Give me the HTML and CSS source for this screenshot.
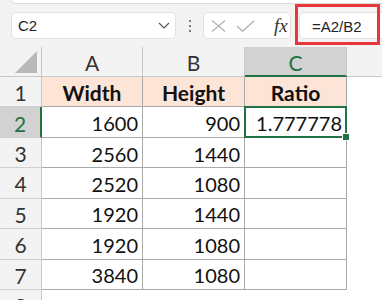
FILE: index.html
```html
<!DOCTYPE html>
<html lang="en">
<head>
    <meta charset="UTF-8">
    <meta name="viewport" content="width=device-width, initial-scale=1.0">
    <title>Ratio</title>
    <link rel="stylesheet" href="styles.css">
</head>
<body>
    <div class="toolbar">
        <div class="ribbon-edge"></div>
        <div class="bar">
            <div class="namebox">
                <span>C2</span>
                <svg class="chevron" width="12" height="7" viewBox="0 0 12 7">
                    <path d="M1 1 L6 6 L11 1" fill="none" stroke="#555" stroke-width="1.2"/>
                </svg>
            </div>
            <div class="dots"><i></i><i></i><i></i></div>
            <div class="fxbox">
                <svg width="15" height="12" viewBox="0 0 15 12">
                    <path d="M1 0.5 L14 11.5 M14 0.5 L1 11.5" stroke="#b0b0b0" stroke-width="1.2"/>
                </svg>
                <svg width="19" height="12" viewBox="0 0 19 12">
                    <path d="M1 6 L6.5 11.3 L18 0.7" fill="none" stroke="#b0b0b0" stroke-width="1.2"/>
                </svg>
                <span class="fx">fx</span>
            </div>
            <div class="formula">=A2/B2</div>
        </div>
        <div class="highlight"></div>
    </div>

    <div class="sheet">
        <div class="corner"><div class="tri"></div></div>
        <div class="colhead">A</div>
        <div class="colhead">B</div>
        <div class="colhead active">C</div>
        <div class="colhead rest"></div>

        <div class="rowhead">1</div>
        <div class="cell title">Width</div>
        <div class="cell title">Height</div>
        <div class="cell title">Ratio</div>
        <div class="blank"></div>

        <div class="rowhead active">2</div>
        <div class="cell">1600</div>
        <div class="cell">900</div>
        <div class="cell selected">1.777778</div>
        <div class="blank"></div>

        <div class="rowhead">3</div>
        <div class="cell">2560</div>
        <div class="cell">1440</div>
        <div class="cell"></div>
        <div class="blank"></div>

        <div class="rowhead">4</div>
        <div class="cell">2520</div>
        <div class="cell">1080</div>
        <div class="cell"></div>
        <div class="blank"></div>

        <div class="rowhead">5</div>
        <div class="cell">1920</div>
        <div class="cell">1440</div>
        <div class="cell"></div>
        <div class="blank"></div>

        <div class="rowhead">6</div>
        <div class="cell">1920</div>
        <div class="cell">1080</div>
        <div class="cell"></div>
        <div class="blank"></div>

        <div class="rowhead">7</div>
        <div class="cell">3840</div>
        <div class="cell">1080</div>
        <div class="cell"></div>
        <div class="blank"></div>

        <div class="rowhead">8</div>
        <div class="blank"></div>
        <div class="blank"></div>
        <div class="blank"></div>
        <div class="blank"></div>
    </div>
</body>
</html>
```

FILE: styles.css
```css
* {
    box-sizing: border-box;
}
body {
    margin: 0;
    background-color: #f3f3f3;
    font-family: Lato, "Open Sans", sans-serif;
    overflow: hidden;
}

/* formula bar */
.toolbar {
    position: relative;
    height: 47px;
}
.ribbon-edge {
    height: 4px;
    margin-left: 11px;
    background: white;
    border-left: 1px solid #dcdcdc;
    border-bottom: 1px solid #dcdcdc;
    border-bottom-left-radius: 5px;
}
.bar {
    display: flex;
    align-items: center;
    height: 27px;
    margin-top: 8px;
    padding-left: 11px;
}
.namebox {
    display: flex;
    align-items: center;
    justify-content: space-between;
    width: 165px;
    height: 27px;
    padding: 0 5px 0 6px;
    background: white;
    border: 1px solid #e2e2e2;
    border-radius: 5px;
    font-family: "Liberation Sans", sans-serif;
    font-size: 15px;
    color: #222;
}
.dots {
    display: flex;
    flex-direction: column;
    gap: 3px;
    margin: 0 12px 0 13px;
}
.dots i {
    width: 2px;
    height: 2px;
    background: #555;
    border-radius: 1px;
}
.fxbox {
    display: flex;
    align-items: center;
    width: 88px;
    height: 27px;
    padding-left: 7px;
    gap: 10px;
    background: white;
    border: 1px solid #e2e2e2;
    border-radius: 5px;
}
.fx {
    margin-left: 9px;
    font-family: "Liberation Serif", serif;
    font-style: italic;
    font-size: 19px;
    color: #333;
}
.formula {
    flex: 1;
    height: 27px;
    margin-left: 8px;
    padding-left: 12px;
    line-height: 27px;
    background: white;
    border: 1px solid #e2e2e2;
    border-right: none;
    border-radius: 5px 0 0 5px;
    font-family: "Liberation Sans", sans-serif;
    font-size: 15px;
    color: #222;
}
.highlight {
    position: absolute;
    left: 295px;
    top: 4px;
    width: 85px;
    height: 41px;
    border: 3px solid #e8363d;
}

/* grid */
.sheet {
    display: grid;
    grid-template-columns: 42px 101px 102px 102px 1fr;
    grid-template-rows: 30px repeat(8, 30.43px);
}
.corner {
    position: relative;
    border-right: 1px solid #c8c8c8;
    border-bottom: 1px solid #c8c8c8;
}
.tri {
    position: absolute;
    right: 4px;
    bottom: 3px;
    width: 22px;
    height: 22px;
    background: #b8b8b8;
    clip-path: polygon(100% 0, 100% 100%, 0 100%);
}
.colhead {
    display: flex;
    align-items: center;
    justify-content: center;
    padding-top: 2px;
    font-size: 21px;
    color: #333;
    border-right: 1px solid #c8c8c8;
    border-bottom: 1px solid #c8c8c8;
}
.colhead.active {
    background: #d2d2d2;
    color: #217346;
    border-bottom: 2px solid #217346;
}
.colhead.rest {
    border-right: none;
}
.rowhead {
    display: flex;
    align-items: center;
    justify-content: center;
    padding-top: 2px;
    font-size: 21px;
    color: #333;
    border-right: 1px solid #c8c8c8;
    border-bottom: 1px solid #d0d0d0;
}
.rowhead.active {
    background: #d2d2d2;
    color: #217346;
    border-right: 2px solid #217346;
}
.cell {
    display: flex;
    align-items: center;
    justify-content: flex-end;
    padding: 2px 4px 0 0;
    background: white;
    font-size: 20px;
    color: #111;
    border-right: 1px solid #a9a9a9;
    border-bottom: 1px solid #a9a9a9;
}
.cell.title {
    justify-content: center;
    padding-right: 0;
    background: #fce4d6;
    font-size: 21px;
    font-weight: bold;
}
.cell.selected {
    position: relative;
}
.cell.selected::after {
    content: "";
    position: absolute;
    left: -1px;
    top: -1px;
    right: -1px;
    bottom: -1px;
    border: 2px solid #217346;
}
.cell.selected::before {
    content: "";
    position: absolute;
    right: -4px;
    bottom: -4px;
    width: 6px;
    height: 6px;
    background: #217346;
    border: 1px solid white;
    z-index: 1;
}
.blank {
    background: white;
}
```
